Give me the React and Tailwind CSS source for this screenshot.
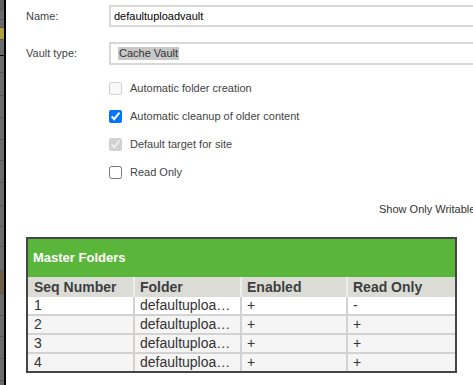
import React from 'react';

const stripRows = [
  { h: 10, c: 'bg-[#5f5f5f]' },
  { h: 10, c: 'bg-[#6b6b6b]' },
  { h: 8, c: 'bg-[#6b6b6b]' },
  { h: 12, c: 'bg-[#b0a040]' },
  { h: 16, c: 'bg-[#6b6b6b]', b: 'border-b border-black' },
  { h: 17, c: 'bg-[#6b6b6b]' },
  { h: 23, c: 'bg-[#6b6b6b]' },
  { h: 22, c: 'bg-[#6b6b6b]' },
  { h: 22, c: 'bg-[#6b6b6b]' },
  { h: 21, c: 'bg-[#6b6b6b]' },
  { h: 22, c: 'bg-[#6b6b6b]' },
  { h: 23, c: 'bg-[#6b6b6b]' },
  { h: 21, c: 'bg-[#6b6b6b]' },
  { h: 20, c: 'bg-[#6b6b6b]' },
  { h: 24, c: 'bg-[#6b6b6b]' },
  { h: 23, c: 'bg-[#6e6048]' },
  { h: 22, c: 'bg-[#6b6b6b]' },
  { h: 21, c: 'bg-[#6b6b6b]' },
  { h: 22, c: 'bg-[#6b6b6b]' },
  { h: 22, c: 'bg-[#6b6b6b]' },
  { h: 22, c: 'bg-[#6b6b6b]' },
];

const options = [
  { label: 'Automatic folder creation', checked: false, disabled: true },
  { label: 'Automatic cleanup of older content', checked: true, disabled: false },
  { label: 'Default target for site', checked: true, disabled: true },
  { label: 'Read Only', checked: false, disabled: false },
];

const folders = [
  { seq: 1, folder: 'defaultuploadvault1', enabled: '+', readOnly: '-' },
  { seq: 2, folder: 'defaultuploadvault2', enabled: '+', readOnly: '+' },
  { seq: 3, folder: 'defaultuploadvault3', enabled: '+', readOnly: '+' },
  { seq: 4, folder: 'defaultuploadvault4', enabled: '+', readOnly: '+' },
];

const App = () => {
  return (
    <div className="w-[473px] h-[385px] overflow-hidden bg-white flex font-['Liberation_Sans',Arial,sans-serif]">
      {/* Sidebar cut off on the left */}
      <div className="w-[6px] shrink-0 flex flex-col border-r-2 border-black bg-[#6b6b6b]">
        {stripRows.map((r, i) => (
          <div
            key={i}
            style={{ height: r.h }}
            className={`shrink-0 ${r.c} ${r.b || 'border-b border-[#565656]'}`}
          />
        ))}
      </div>

      {/* Main form */}
      <div className="flex-1 min-w-0 pl-[20px] pt-[5px]">
        {/* Name */}
        <div className="flex items-center">
          <label className="w-[83px] shrink-0 text-[11px] text-[#444]">Name:</label>
          <div className="w-[420px] shrink-0 h-[22px] border-2 border-[#d8d8d4] flex items-center pl-[3px] text-[11px] text-black">
            defaultuploadvault
          </div>
        </div>

        {/* Vault type */}
        <div className="flex items-start mt-[15px]">
          <label className="w-[83px] shrink-0 text-[11px] text-[#444] pt-[3px]">Vault type:</label>
          <div className="w-[420px] shrink-0 h-[23px] border-2 border-[#d8d8d4] flex items-center pl-[7px] text-[11px]">
            <span className="bg-[#c8c8c8] text-[#333] px-[1px] leading-[13px]">Cache Vault</span>
          </div>
        </div>

        {/* Checkboxes */}
        <div className="mt-[9px] ml-[83px]">
          {options.map((o) => (
            <div key={o.label} className="h-[28px] flex items-center gap-[8px]">
              <input
                type="checkbox"
                checked={o.checked}
                disabled={o.disabled}
                readOnly
                className="m-0 w-[13px] h-[13px]"
              />
              <span className="text-[11px] text-[#444] whitespace-nowrap">{o.label}</span>
            </div>
          ))}
        </div>

        {/* Filter */}
        <div className="mt-[17px] ml-[353px] text-[11px] text-[#333] whitespace-nowrap leading-[13px]">
          Show Only Writable
        </div>

        {/* Master Folders table */}
        <div className="mt-[21px] w-[431px] border-2 border-[#454545]">
          <div className="h-[38px] bg-[#5ab63a] flex items-center pl-[5px] text-[13px] font-bold text-white">
            Master Folders
          </div>
          <div className="grid grid-cols-[105px_107px_106px_109px] h-[20px] bg-[#dcdcd6] text-[14px] font-bold text-[#3e3e3e]">
            <div className="pl-[6px] leading-[20px]">Seq Number</div>
            <div className="pl-[5px] leading-[20px] border-l-2 border-[#eeeeea]">Folder</div>
            <div className="pl-[5px] leading-[20px] border-l-2 border-[#eeeeea]">Enabled</div>
            <div className="pl-[5px] leading-[20px] border-l-2 border-[#eeeeea]">Read Only</div>
          </div>
          {folders.map((f, i) => (
            <div
              key={f.seq}
              className={`grid grid-cols-[105px_107px_106px_109px] text-[14px] text-[#333] ${i === 0 ? 'bg-white' : 'bg-[#f5f5f5]'} ${i < folders.length - 1 ? 'border-b-2 border-[#d2d2d2]' : ''}`}
            >
              <div className="h-[17px] leading-[17px] pl-[6px]">{f.seq}</div>
              <div className="h-[17px] leading-[17px] pl-[5px] pr-[5px] border-l-2 border-[#d2d2d2] truncate">{f.folder}</div>
              <div className="h-[17px] leading-[17px] pl-[5px] border-l-2 border-[#d2d2d2]">{f.enabled}</div>
              <div className="h-[17px] leading-[17px] pl-[5px] border-l-2 border-[#d2d2d2]">{f.readOnly}</div>
            </div>
          ))}
        </div>
      </div>
    </div>
  );
};

export default App;
